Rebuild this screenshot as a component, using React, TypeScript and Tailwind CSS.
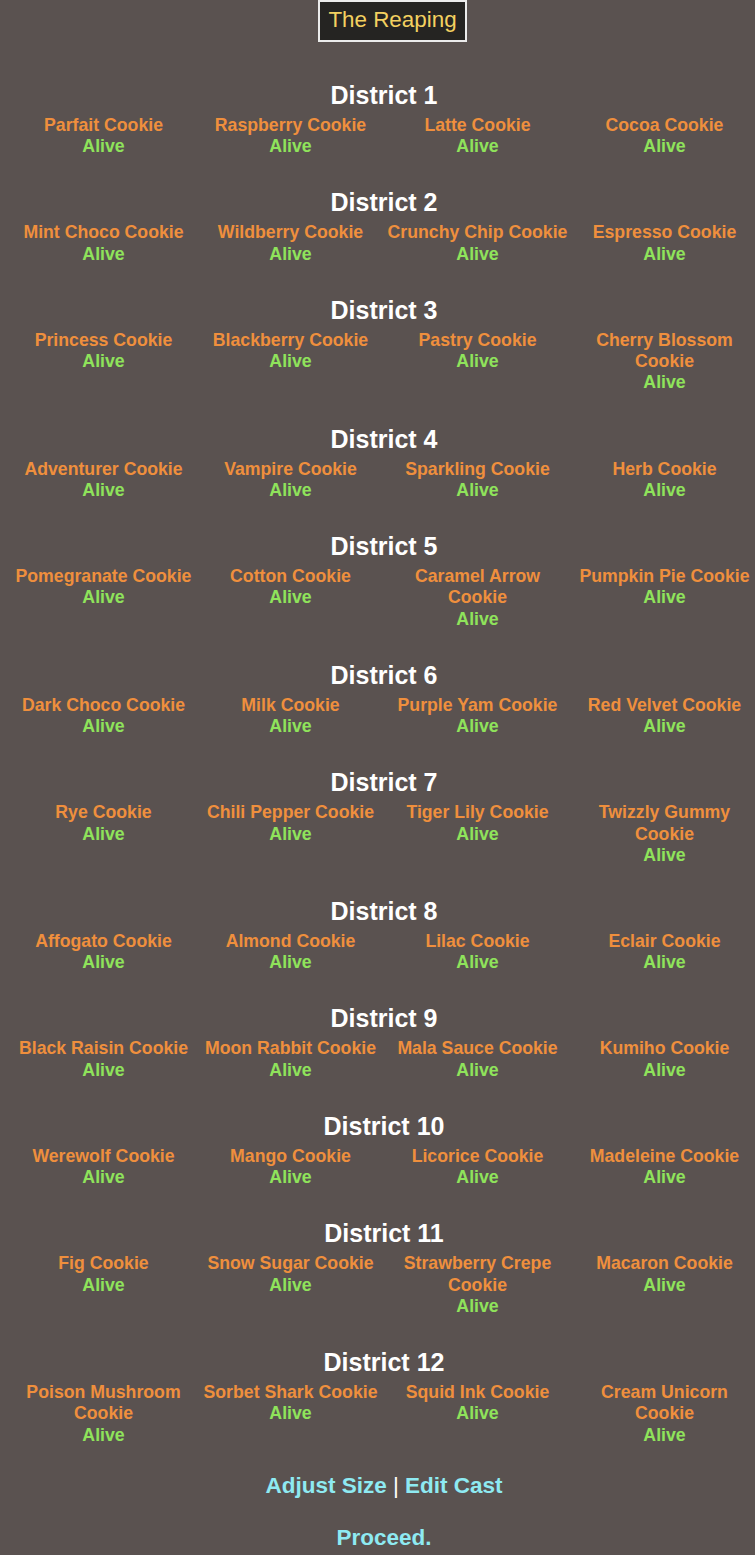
const districts: string[][] = [
  ['Parfait Cookie', 'Raspberry Cookie', 'Latte Cookie', 'Cocoa Cookie'],
  ['Mint Choco Cookie', 'Wildberry Cookie', 'Crunchy Chip Cookie', 'Espresso Cookie'],
  ['Princess Cookie', 'Blackberry Cookie', 'Pastry Cookie', 'Cherry Blossom Cookie'],
  ['Adventurer Cookie', 'Vampire Cookie', 'Sparkling Cookie', 'Herb Cookie'],
  ['Pomegranate Cookie', 'Cotton Cookie', 'Caramel Arrow Cookie', 'Pumpkin Pie Cookie'],
  ['Dark Choco Cookie', 'Milk Cookie', 'Purple Yam Cookie', 'Red Velvet Cookie'],
  ['Rye Cookie', 'Chili Pepper Cookie', 'Tiger Lily Cookie', 'Twizzly Gummy Cookie'],
  ['Affogato Cookie', 'Almond Cookie', 'Lilac Cookie', 'Eclair Cookie'],
  ['Black Raisin Cookie', 'Moon Rabbit Cookie', 'Mala Sauce Cookie', 'Kumiho Cookie'],
  ['Werewolf Cookie', 'Mango Cookie', 'Licorice Cookie', 'Madeleine Cookie'],
  ['Fig Cookie', 'Snow Sugar Cookie', 'Strawberry Crepe Cookie', 'Macaron Cookie'],
  ['Poison Mushroom Cookie', 'Sorbet Shark Cookie', 'Squid Ink Cookie', 'Cream Unicorn Cookie'],
]

export default function App() {
  return (
    <div className="w-[755px] min-h-[1555px] overflow-hidden bg-[#5a5250] font-['Liberation_Sans',Arial,sans-serif]">
      <div className="w-[768px]">
        {/* title */}
        <div className="flex justify-center pl-[17px]">
          <div className="h-[42px] w-[149px] flex items-center justify-center pb-[2px] bg-[#252422] border-2 border-[#ececec] text-[22.4px] leading-[26px] text-[#f3d060]">
            The Reaping
          </div>
        </div>

        {/* districts */}
        <div className="mt-[39px] flex flex-col gap-[31px]">
          {districts.map((tributes, i) => (
            <div key={i} className="flex flex-col items-center">
              <h2 className="text-[25px] leading-[29px] font-bold text-white mb-[5px]">District {i + 1}</h2>
              <div className="grid grid-cols-[repeat(4,187px)] justify-center">
                {tributes.map((name) => (
                  <div key={name} className="px-[2px] text-center font-bold text-[17.7px] leading-[1.2]">
                    <div className="text-[#ef8f3d]">{name}</div>
                    <div className="text-[#8fe35b]">Alive</div>
                  </div>
                ))}
              </div>
            </div>
          ))}
        </div>

        {/* links */}
        <div className="mt-[27px] flex flex-col items-center gap-[26px] font-bold text-[22.5px] leading-[26px] text-[#8eeaf2]">
          <div>
            Adjust Size <span className="font-normal text-white">|</span> Edit Cast
          </div>
          <div>Proceed.</div>
        </div>
      </div>
    </div>
  )
}
